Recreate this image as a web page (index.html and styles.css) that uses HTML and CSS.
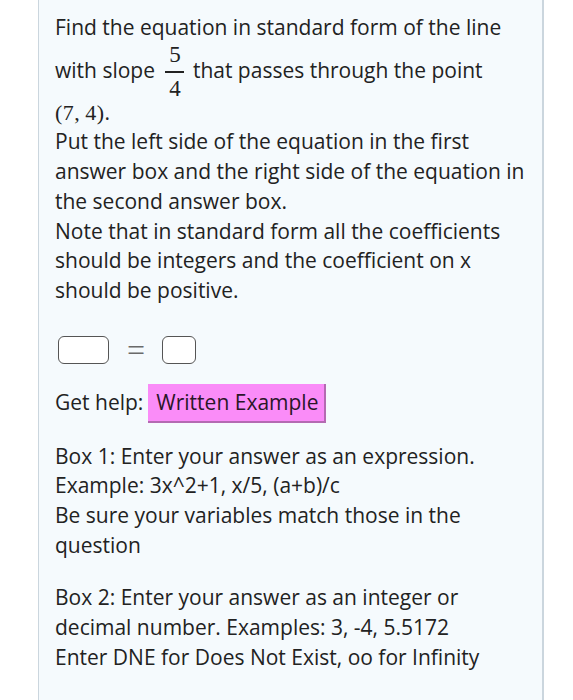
FILE: index.html
```html
<!DOCTYPE html>
<html lang="en">
<head>
<meta charset="utf-8">
<title>Question</title>
<link rel="stylesheet" href="styles.css">
</head>
<body>
<div class="card">
  <p class="para">Find the equation in standard form of the line with slope <span class="frac"><span class="num">5</span><span class="bar"></span><span class="den">4</span></span> that passes through the point <span class="math">(7,&#8201;4)</span>.<br>Put the left side of the equation in the first answer box and the right side of the equation in the second answer box.<br>Note that in standard form all the coefficients should be integers and the coefficient on x should be positive.</p>
  <div class="answer">
    <span class="box wide"></span>
    <span class="eq">=</span>
    <span class="box"></span>
  </div>
  <div class="help">
    <span>Get help:</span>
    <span class="btn">Written Example</span>
  </div>
  <p class="para box1">Box 1: Enter your answer as an expression.<br>Example: 3x^2+1, x/5, (a+b)/c<br>Be sure your variables match those in the question</p>
  <p class="para box2">Box 2: Enter your answer as an integer or decimal number. Examples: 3, -4, 5.5172<br>Enter DNE for Does Not Exist, oo for Infinity</p>
</div>
</body>
</html>
```
FILE: styles.css
```css
html, body {
  margin: 0;
  padding: 0;
  background: #ffffff;
}
body {
  font-family: "Open Sans", "Liberation Sans", sans-serif;
  font-size: 21px;
  line-height: 29.7px;
  color: #222222;
}
.card {
  margin-left: 38px;
  width: 506px;
  min-height: 700px;
  box-sizing: border-box;
  padding: 13px 12px 0 16px;
  background: #f5fafd;
  border-left: 1px solid #cbd6de;
  border-right: 2px solid #cbd6de;
}
.para {
  margin: 0;
}
.frac {
  display: inline-block;
  vertical-align: -17.6px;
  padding-top: 3.5px;
  margin: 0 3px 0 5px;
  text-align: center;
  font-family: "Liberation Serif", "DejaVu Serif", serif;
  font-size: 23px;
}
.num, .den {
  display: block;
  line-height: 18px;
}
.bar {
  display: block;
  width: 19px;
  height: 1.5px;
  margin: 7px 0 7px;
  background: #222;
}
.math {
  font-family: "Liberation Serif", "DejaVu Serif", serif;
  font-size: 22px;
  white-space: nowrap;
  letter-spacing: 0.5px;
}
.answer {
  display: flex;
  align-items: center;
  margin-top: 30px;
  padding-left: 3px;
}
.box {
  display: block;
  width: 32px;
  height: 26px;
  border: 1.5px solid #555;
  border-radius: 6px;
  background: #fff;
}
.box.wide {
  width: 49px;
}
.eq {
  font-family: "Liberation Serif", "DejaVu Serif", serif;
  font-size: 32px;
  line-height: 29px;
  color: #6a6a6a;
  margin: 0 17px 0 18px;
}
.help {
  display: flex;
  align-items: center;
  gap: 5px;
  margin-top: 19px;
}
.btn {
  display: inline-block;
  background: #fa8cf8;
  color: #2a1628;
  padding: 4px 6px 4px 8px;
  line-height: 29px;
  border-right: 2px solid #b46ab2;
  border-bottom: 2px solid #b46ab2;
}
.box1 {
  margin-top: 19px;
}
.box2 {
  margin-top: 23px;
}
```
